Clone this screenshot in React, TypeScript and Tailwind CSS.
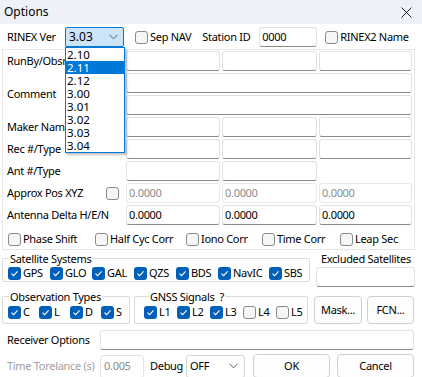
import React from 'react';

const font = { fontFamily: '"Noto Sans", "Open Sans", Arial, sans-serif' };

function Check({ checked = false }: { checked?: boolean }) {
    if (checked) {
        return (
            <span className="flex items-center justify-center w-[13px] h-[13px] shrink-0 rounded-[3px] bg-[#005fb8]">
                <svg width="9" height="9" viewBox="0 0 9 9">
                    <path d="M1.5 4.6 L3.6 6.6 L7.6 2.4" fill="none" stroke="white" strokeWidth="1.1" />
                </svg>
            </span>
        );
    }
    return <span className="block w-[13px] h-[13px] shrink-0 rounded-[3px] border border-[#8a8a8a] bg-[#f6f6f6]" />;
}

function CheckItem({ label, checked, w }: { label: string; checked?: boolean; w: string }) {
    return (
        <div className={`flex items-center gap-[2px] whitespace-nowrap ${w}`}>
            <Check checked={checked} />
            <span>{label}</span>
        </div>
    );
}

function Field({ value = '', disabled = false, className = '' }: { value?: string; disabled?: boolean; className?: string }) {
    return (
        <div
            className={`h-[20px] flex items-center px-[2px] bg-white border rounded-[3px] ${
                disabled ? 'border-[#e8e8e8] text-[#8c8c8c]' : 'border-[#e2e2e2] border-b-[#8a8a8a] text-black'
            } ${className}`}
        >
            {value}
        </div>
    );
}

function Chevron() {
    return (
        <svg width="9" height="6" viewBox="0 0 9 6">
            <path d="M0.5 0.8 L4.5 4.8 L8.5 0.8" fill="none" stroke="#606060" strokeWidth="1" />
        </svg>
    );
}

const versions = ['2.10', '2.11', '2.12', '3.00', '3.01', '3.02', '3.03', '3.04'];

export default function App() {
    return (
        <div
            className="relative w-[422px] h-[377px] bg-white text-[11px] leading-[14px] tracking-[-0.3px] text-black overflow-hidden"
            style={font}
        >
            {/* title bar */}
            <div className="h-[24px] bg-[#eef2f8] flex items-center justify-between pl-[4px] pr-[10px] text-[12px] tracking-normal">
                <span>Options</span>
                <svg width="11" height="11" viewBox="0 0 11 11">
                    <path d="M0.5 0.5 L10.5 10.5 M10.5 0.5 L0.5 10.5" stroke="#222" strokeWidth="1" />
                </svg>
            </div>

            {/* row 1 */}
            <div className="mt-[3px] h-[20px] flex items-center pl-[7px]">
                <span className="w-[58px]">RINEX Ver</span>
                <div className="w-[59px] h-[20px] flex items-center justify-between pl-[3px] pr-[5px] bg-[#cce4f7] border border-[#0078d4] rounded-[2px] text-[12px] tracking-normal">
                    <span>3.03</span>
                    <Chevron />
                </div>
                <div className="ml-[11px] flex items-center gap-[2px]">
                    <Check />
                    <span>Sep NAV</span>
                </div>
                <span className="ml-[11px] w-[57px]">Station ID</span>
                <Field value="0000" className="w-[58px]" />
                <div className="ml-[8px] flex items-center gap-[2px]">
                    <Check />
                    <span>RINEX2 Name</span>
                </div>
            </div>

            {/* main fields panel */}
            <div className="mt-[2px] ml-[2px] w-[413px] border border-[#e6e6e6] pl-[4px] pt-[1px] pb-[2px]">
                <div className="grid grid-cols-[117px_94px_95px_93px] gap-[2px] auto-rows-[20px]">
                    <span className="self-center whitespace-nowrap">RunBy/Obsr</span>
                    <Field />
                    <Field />
                    <Field />

                    <span className="row-span-2 self-center">Comment</span>
                    <Field className="col-span-3" />
                    <Field className="col-span-3" />

                    <span className="self-center whitespace-nowrap">Maker Name</span>
                    <Field />
                    <Field />
                    <Field />

                    <span className="self-center">Rec #/Type</span>
                    <Field />
                    <Field />
                    <Field />

                    <span className="self-center">Ant #/Type</span>
                    <Field />
                    <Field />
                    <span />

                    <div className="flex items-center justify-between pr-[5px]">
                        <span>Approx Pos XYZ</span>
                        <Check />
                    </div>
                    <Field value="0.0000" disabled />
                    <Field value="0.0000" disabled />
                    <Field value="0.0000" disabled />

                    <span className="self-center whitespace-nowrap">Antenna Delta H/E/N</span>
                    <Field value="0.0000" />
                    <Field value="0.0000" />
                    <Field value="0.0000" />
                </div>

                <div className="mt-[6px] h-[16px] flex items-center pl-[1px]">
                    <CheckItem label="Phase Shift" w="w-[87px]" />
                    <CheckItem label="Half Cyc Corr" w="w-[91px]" />
                    <CheckItem label="Iono Corr" w="w-[76px]" />
                    <CheckItem label="Time Corr" w="w-[78px]" />
                    <CheckItem label="Leap Sec" w="w-[70px]" />
                </div>
            </div>

            {/* satellite systems */}
            <div className="mt-[2px] flex">
                <fieldset className="ml-[2px] w-[307px] h-[30px] border border-[#dcdcdc] rounded-[2px] pl-[5px]">
                    <legend className="ml-[1px] px-[1px] leading-[13px]">Satellite Systems</legend>
                    <div className="h-[16px] flex items-center">
                        <CheckItem label="GPS" checked w="w-[42px]" />
                        <CheckItem label="GLO" checked w="w-[42px]" />
                        <CheckItem label="GAL" checked w="w-[42px]" />
                        <CheckItem label="QZS" checked w="w-[42px]" />
                        <CheckItem label="BDS" checked w="w-[42px]" />
                        <CheckItem label="NavIC" checked w="w-[51px]" />
                        <CheckItem label="SBS" checked w="w-[40px]" />
                    </div>
                </fieldset>
                <div className="ml-[6px] w-[99px] flex flex-col">
                    <span className="pl-[5px] leading-[14px] whitespace-nowrap">Excluded Satellites</span>
                    <Field className="mt-[1px]" />
                </div>
            </div>

            {/* observation types / signals */}
            <div className="mt-[3px] flex items-end">
                <fieldset className="ml-[2px] w-[128px] h-[34px] border border-[#dcdcdc] rounded-[2px] pl-[5px]">
                    <legend className="ml-[1px] px-[1px] leading-[13px]">Observation Types</legend>
                    <div className="mt-[1px] h-[16px] flex items-center">
                        <CheckItem label="C" checked w="w-[31px]" />
                        <CheckItem label="L" checked w="w-[31px]" />
                        <CheckItem label="D" checked w="w-[31px]" />
                        <CheckItem label="S" checked w="w-[25px]" />
                    </div>
                </fieldset>
                <fieldset className="ml-[4px] w-[174px] h-[34px] border border-[#dcdcdc] rounded-[2px] pl-[9px]">
                    <legend className="ml-[5px] px-[1px] leading-[13px] whitespace-pre">GNSS Signals  ?</legend>
                    <div className="mt-[1px] h-[16px] flex items-center">
                        <CheckItem label="L1" checked w="w-[33px]" />
                        <CheckItem label="L2" checked w="w-[33px]" />
                        <CheckItem label="L3" checked w="w-[33px]" />
                        <CheckItem label="L4" w="w-[33px]" />
                        <CheckItem label="L5" w="w-[30px]" />
                    </div>
                </fieldset>
                <div className="ml-[6px] flex gap-[5px]">
                    <button className="w-[48px] h-[28px] bg-[#fdfdfd] border border-[#d0d0d0] rounded-[4px]">Mask...</button>
                    <button className="w-[47px] h-[28px] bg-[#fdfdfd] border border-[#d0d0d0] rounded-[4px]">FCN...</button>
                </div>
            </div>

            {/* receiver options */}
            <div className="mt-[6px] h-[20px] flex items-center pl-[7px]">
                <span className="w-[93px] whitespace-nowrap">Receiver Options</span>
                <Field className="w-[314px]" />
            </div>

            {/* bottom row */}
            <div className="mt-[4px] h-[24px] flex items-center pl-[7px]">
                <span className="w-[93px] text-[#a0a0a0] whitespace-nowrap">Time Torelance (s)</span>
                <div className="w-[44px] h-[23px] flex items-center px-[3px] bg-white border border-[#e4e4e4] rounded-[3px] text-[#8c8c8c]">
                    0.005
                </div>
                <span className="ml-[6px] w-[36px]">Debug</span>
                <div className="w-[59px] h-[23px] flex items-center justify-between pl-[3px] pr-[6px] bg-white border border-[#d4d4d4] rounded-[3px]">
                    <span>OFF</span>
                    <Chevron />
                </div>
                <button className="ml-[8px] w-[77px] h-[24px] bg-[#fdfdfd] border border-[#d0d0d0] rounded-[4px]">OK</button>
                <button className="ml-[7px] w-[77px] h-[24px] bg-[#fdfdfd] border border-[#d0d0d0] rounded-[4px]">Cancel</button>
            </div>

            {/* open version list */}
            <div className="absolute left-[65px] top-[47px] w-[60px] bg-white border border-[#0078d4] shadow-[2px_2px_2px_rgba(0,0,0,0.25)] text-[11.5px] leading-[13px] tracking-normal">
                {versions.map(v => (
                    <div key={v} className={`h-[13px] pl-[1px] ${v === '2.11' ? 'bg-[#0078d7] text-white' : ''}`}>
                        {v}
                    </div>
                ))}
            </div>
        </div>
    );
}
